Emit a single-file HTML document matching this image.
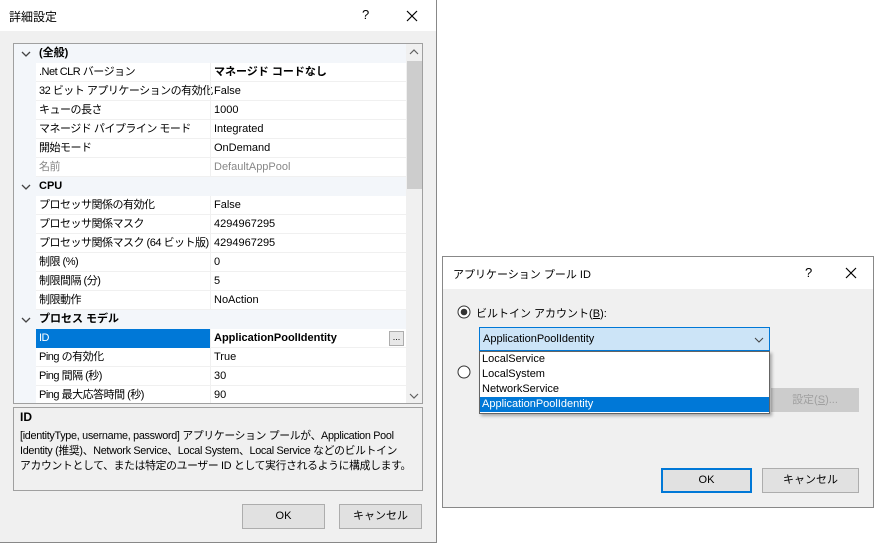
<!DOCTYPE html>
<html><head><meta charset="utf-8"><style>
*{margin:0;padding:0;box-sizing:border-box}
body{width:881px;height:543px;position:relative;background:#fff;font-family:"Liberation Sans","Noto Sans CJK JP",sans-serif;font-size:11px;color:#000;overflow:hidden}
.a{position:absolute;white-space:nowrap}
.dlg{position:absolute;background:#f0f0f0;border:1px solid #888}
.tb{position:absolute;left:0;right:0;top:0;background:#fff}
.btn{position:absolute;background:#e1e1e1;border:1px solid #adadad;text-align:center;line-height:23px}
.row{position:absolute;left:22px;width:370px;height:19px;border-bottom:1px solid #f0f0f0;background:#fff}
.row .n{position:absolute;left:3px;top:0;line-height:18px;letter-spacing:-0.5px}
.row .v{position:absolute;left:178px;top:0;line-height:18px}
.row .s{position:absolute;left:174px;top:0;bottom:0;border-left:1px solid #f0f0f0}
.cat{position:absolute;left:0;width:392px;height:19px;background:#f3f6fa;font-weight:bold}
.cat .n{position:absolute;left:25px;top:0;line-height:18px}
.chev{position:absolute;left:7px;top:6px}
</style></head><body>
<div class="dlg" style="left:0;top:0;width:437px;height:543px;border-top:none;border-left:none">
 <div class="tb" style="height:31px"></div>
 <div class="a" style="left:9px;top:8px;font-size:12px">詳細設定</div>
 <div class="a" style="left:362px;top:7px;font-size:13px">?</div>
 <svg class="a" style="left:406px;top:10px" width="12" height="12"><path d="M1 1L11 11M11 1L1 11" stroke="#000" stroke-width="1.2"/></svg>
 <div class="a" style="left:13px;top:43px;width:410px;height:361px;border:1px solid #a0a0a0;background:#f3f6fa;overflow:hidden">
  <div class="cat" style="top:0"><svg class="chev" width="10" height="8"><path d="M1 2L5 6L9 2" stroke="#444" fill="none" stroke-width="1.3"/></svg><span class="n">(全般)</span></div>
  <div class="row" style="top:19px"><span class="n">.Net CLR バージョン</span><span class="s"></span><span class="v" style="font-weight:bold">マネージド コードなし</span></div>
  <div class="row" style="top:38px"><span class="n">32 ビット アプリケーションの有効化</span><span class="s"></span><span class="v">False</span></div>
  <div class="row" style="top:57px"><span class="n">キューの長さ</span><span class="s"></span><span class="v">1000</span></div>
  <div class="row" style="top:76px"><span class="n">マネージド パイプライン モード</span><span class="s"></span><span class="v">Integrated</span></div>
  <div class="row" style="top:95px"><span class="n">開始モード</span><span class="s"></span><span class="v">OnDemand</span></div>
  <div class="row" style="top:114px;color:#888"><span class="n">名前</span><span class="s"></span><span class="v">DefaultAppPool</span></div>
  <div class="cat" style="top:133px"><svg class="chev" width="10" height="8"><path d="M1 2L5 6L9 2" stroke="#444" fill="none" stroke-width="1.3"/></svg><span class="n">CPU</span></div>
  <div class="row" style="top:152px"><span class="n">プロセッサ関係の有効化</span><span class="s"></span><span class="v">False</span></div>
  <div class="row" style="top:171px"><span class="n">プロセッサ関係マスク</span><span class="s"></span><span class="v">4294967295</span></div>
  <div class="row" style="top:190px"><span class="n">プロセッサ関係マスク (64 ビット版)</span><span class="s"></span><span class="v">4294967295</span></div>
  <div class="row" style="top:209px"><span class="n">制限 (%)</span><span class="s"></span><span class="v">0</span></div>
  <div class="row" style="top:228px"><span class="n">制限間隔 (分)</span><span class="s"></span><span class="v">5</span></div>
  <div class="row" style="top:247px"><span class="n">制限動作</span><span class="s"></span><span class="v">NoAction</span></div>
  <div class="cat" style="top:266px"><svg class="chev" width="10" height="8"><path d="M1 2L5 6L9 2" stroke="#444" fill="none" stroke-width="1.3"/></svg><span class="n">プロセス モデル</span></div>
  <div class="row" style="top:285px"><span class="a" style="left:0;top:0;width:174px;height:19px;background:#0078d7"></span><span class="n" style="color:#fff">ID</span><span class="s"></span><span class="v" style="font-weight:bold">ApplicationPoolIdentity</span><span class="a" style="left:353px;top:2px;width:15px;height:15px;border:1px solid #adadad;background:#e8e8e8;font-size:9px;text-align:center;line-height:10px">...</span></div>
  <div class="row" style="top:304px"><span class="n">Ping の有効化</span><span class="s"></span><span class="v">True</span></div>
  <div class="row" style="top:323px"><span class="n">Ping 間隔 (秒)</span><span class="s"></span><span class="v">30</span></div>
  <div class="row" style="top:342px"><span class="n">Ping 最大応答時間 (秒)</span><span class="s"></span><span class="v">90</span></div>
  <div class="a" style="left:392px;top:0;width:17px;height:361px;background:#f0f0f0"></div>
  <div class="a" style="left:393px;top:17px;width:15px;height:128px;background:#cdcdcd"></div>
  <svg class="a" style="left:395px;top:5px" width="10" height="7"><path d="M1 5L5 1L9 5" stroke="#606060" fill="none" stroke-width="1.2"/></svg>
  <svg class="a" style="left:395px;top:349px" width="10" height="7"><path d="M1 1L5 5L9 1" stroke="#606060" fill="none" stroke-width="1.2"/></svg>
 </div>
 <div class="a" style="left:13px;top:407px;width:410px;height:84px;border:1px solid #a0a0a0;background:#f0f0f0">
  <div class="a" style="left:6px;top:2px;font-weight:bold;font-size:12px">ID</div>
  <div class="a" style="left:6px;top:21px;line-height:15px;font-size:10.8px;letter-spacing:-0.3px">[identityType, username, password] アプリケーション プールが、Application Pool<br>Identity (推奨)、Network Service、Local System、Local Service などのビルトイン<br>アカウントとして、または特定のユーザー ID として実行されるように構成します。</div>
 </div>
 <div class="btn" style="left:242px;top:504px;width:83px;height:25px">OK</div>
 <div class="btn" style="left:339px;top:504px;width:83px;height:25px">キャンセル</div>
</div>
<div class="dlg" style="left:442px;top:256px;width:432px;height:252px">
 <div class="tb" style="height:32px"></div>
 <div class="a" style="left:10px;top:9px">アプリケーション プール ID</div>
 <div class="a" style="left:362px;top:8px;font-size:13px">?</div>
 <svg class="a" style="left:402px;top:10px" width="12" height="12"><path d="M1 1L11 11M11 1L1 11" stroke="#000" stroke-width="1.2"/></svg>
 <svg class="a" style="left:14px;top:48px" width="14" height="14"><circle cx="7" cy="7" r="6" fill="#fff" stroke="#333"/><circle cx="7" cy="7" r="3.3" fill="#333"/></svg>
 <div class="a" style="left:33px;top:48px">ビルトイン アカウント(<u>B</u>):</div>
 <svg class="a" style="left:14px;top:108px" width="14" height="14"><circle cx="7" cy="7" r="6" fill="#fff" stroke="#333"/></svg>
 <div class="a" style="left:36px;top:70px;width:291px;height:24px;background:#cce4f7;border:1px solid #0078d7"></div>
 <div class="a" style="left:40px;top:70px;line-height:24px">ApplicationPoolIdentity</div>
 <svg class="a" style="left:311px;top:80px" width="10" height="6"><path d="M1 1L5 5L9 1" stroke="#444" fill="none"/></svg>
 <div class="btn" style="left:328px;top:131px;width:88px;height:24px;color:#a0a0a0;border-color:#ccc;background:#ccc">設定(<u>S</u>)...</div>
 <div class="a" style="left:36px;top:94px;width:291px;height:63px;background:#fff;border:1px solid #646464;box-shadow:2px 2px 3px rgba(0,0,0,.3);line-height:15px">
  <div style="padding-left:2px">LocalService</div>
  <div style="padding-left:2px">LocalSystem</div>
  <div style="padding-left:2px">NetworkService</div>
  <div style="padding-left:2px;background:#0078d7;color:#fff">ApplicationPoolIdentity</div>
 </div>
 <div class="btn" style="left:218px;top:211px;width:91px;height:25px;border:2px solid #0078d7;line-height:21px">OK</div>
 <div class="btn" style="left:319px;top:211px;width:97px;height:25px">キャンセル</div>
</div>
</body></html>
